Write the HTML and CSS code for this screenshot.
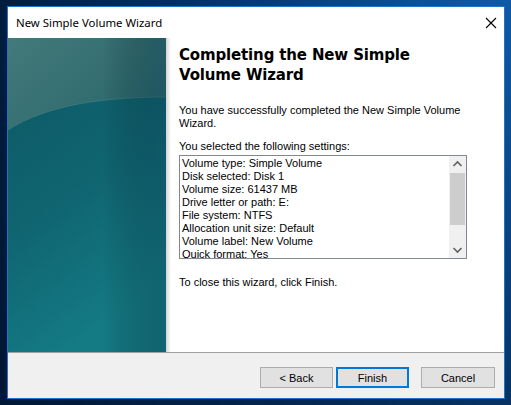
FILE: index.html
```html
<!DOCTYPE html>
<html lang="en">
<head>
<meta charset="utf-8">
<title>New Simple Volume Wizard</title>
<link rel="stylesheet" href="styles.css">
</head>
<body>
<div class="window">
  <div class="titlebar">
    <span class="title">New Simple Volume Wizard</span>
    <svg class="close" width="12" height="12" viewBox="0 0 12 12"><path d="M1 1 L11 11 M11 1 L1 11" stroke="#000" stroke-width="1.1" fill="none"/></svg>
  </div>
  <div class="main">
    <div class="side">
      <svg width="158" height="314" viewBox="0 0 158 314">
        <defs>
          <linearGradient id="low" x1="0" y1="0" x2="0.35" y2="1">
            <stop offset="0" stop-color="#0d5863"/>
            <stop offset="0.55" stop-color="#0f6470"/>
            <stop offset="1" stop-color="#147a84"/>
          </linearGradient>
          <linearGradient id="high" x1="0" y1="0" x2="1" y2="0.6">
            <stop offset="0" stop-color="#437a7a"/>
            <stop offset="1" stop-color="#2b676c"/>
          </linearGradient>
          <linearGradient id="rside" x1="0" y1="0" x2="1" y2="0">
            <stop offset="0.6" stop-color="#000" stop-opacity="0"/>
            <stop offset="1" stop-color="#0a3d55" stop-opacity="0.35"/>
          </linearGradient>
        </defs>
        <rect width="158" height="314" fill="url(#low)"/>
        <path d="M0 0 H158 V59 C100 59 40 66 0 92 Z" fill="url(#high)"/>
        <path d="M0 92 C40 66 100 59 158 59" stroke="#4f8585" stroke-opacity="0.5" fill="none"/>
        <rect width="158" height="314" fill="url(#rside)"/>
      </svg>
    </div>
    <div class="shade"></div>
    <div class="content">
      <h1 class="heading">Completing the New Simple Volume Wizard</h1>
      <p class="intro">You have successfully completed the New Simple Volume Wizard.</p>
      <p class="label">You selected the following settings:</p>
      <div class="listbox">
        <div class="items">
          <div>Volume type: Simple Volume</div>
          <div>Disk selected: Disk 1</div>
          <div>Volume size: 61437 MB</div>
          <div>Drive letter or path: E:</div>
          <div>File system: NTFS</div>
          <div>Allocation unit size: Default</div>
          <div>Volume label: New Volume</div>
          <div>Quick format: Yes</div>
        </div>
        <div class="scrollbar">
          <svg class="arrow" width="17" height="17" viewBox="0 0 17 17"><path d="M4.5 10 L8.5 6 L12.5 10" stroke="#606060" stroke-width="1.6" fill="none"/></svg>
          <div class="track"><div class="thumb"></div></div>
          <svg class="arrow" width="17" height="17" viewBox="0 0 17 17"><path d="M4.5 7 L8.5 11 L12.5 7" stroke="#606060" stroke-width="1.6" fill="none"/></svg>
        </div>
      </div>
      <p class="closing">To close this wizard, click Finish.</p>
    </div>
  </div>
  <div class="footer">
    <button class="btn">&lt; Back</button>
    <button class="btn primary">Finish</button>
    <button class="btn cancel">Cancel</button>
  </div>
</div>
</body>
</html>
```

FILE: styles.css
```css
html, body {
  margin: 0;
  padding: 0;
  height: 100%;
}

body {
  background:
    linear-gradient(to bottom, rgba(0, 20, 50, 0) 0%, rgba(0, 18, 45, 0.55) 100%),
    linear-gradient(to right, #001d3f 0%, #062f62 35%, #0c4f94 80%, #0f5aa6 100%);
  overflow: hidden;
  font-family: "Liberation Sans", Arial, sans-serif;
}

.window {
  margin: 6px 0 0 7px;
  width: 498px;
  height: 393px;
  box-sizing: border-box;
  border: 1px solid #1c75c9;
  background: #fff;
  display: flex;
  flex-direction: column;
}

.titlebar {
  height: 31px;
  display: flex;
  align-items: center;
  justify-content: space-between;
  padding: 0 7px 0 8px;
  flex: none;
}

.title {
  font-family: "Noto Sans", "Open Sans", sans-serif;
  font-size: 11.4px;
  color: #000;
}

.close {
  display: block;
}

.main {
  height: 314px;
  display: flex;
  flex: none;
}

.side {
  width: 158px;
  flex: none;
}

.side svg {
  display: block;
}

.shade {
  width: 5px;
  flex: none;
  background: linear-gradient(to right, #d4d4d4, #fff);
}

.content {
  flex: 1;
  padding-left: 8px;
  font-size: 11px;
  color: #000;
}

.heading {
  margin: 7px 0 0;
  width: 245px;
  font-family: "DejaVu Sans", Verdana, sans-serif;
  font-weight: bold;
  font-size: 15px;
  letter-spacing: -0.15px;
  line-height: 20px;
}

.intro {
  margin: 19px 0 0;
  width: 285px;
  line-height: 13px;
}

.label {
  margin: 10px 0 0;
  line-height: 13px;
}

.listbox {
  margin-top: 2px;
  width: 288px;
  height: 104px;
  box-sizing: border-box;
  border: 1px solid #828790;
  display: flex;
  overflow: hidden;
}

.items {
  flex: 1;
  padding: 1px 0 0 2px;
  line-height: 13px;
  white-space: nowrap;
  overflow: hidden;
}

.scrollbar {
  width: 17px;
  flex: none;
  background: #f0f0f0;
  display: flex;
  flex-direction: column;
}

.arrow {
  display: block;
  flex: none;
}

.track {
  flex: 1;
  padding: 0 1px;
}

.thumb {
  height: 52px;
  background: #cdcdcd;
}

.closing {
  margin: 17px 0 0;
  line-height: 13px;
}

.footer {
  flex: 1;
  border-top: 1px solid #a0a0a0;
  background: #f0f0f0;
  display: flex;
  align-items: flex-start;
  padding: 14px 9px 0 0;
  justify-content: flex-end;
}

.btn {
  width: 73px;
  height: 21px;
  box-sizing: border-box;
  border: 1px solid #adadad;
  background: #e1e1e1;
  font-family: "Liberation Sans", Arial, sans-serif;
  font-size: 11px;
  color: #000;
  padding: 0;
  margin: 0 0 0 3px;
}

.primary {
  border: 2px solid #0078d7;
}

.cancel {
  width: 74px;
  margin-left: 12px;
}
```
